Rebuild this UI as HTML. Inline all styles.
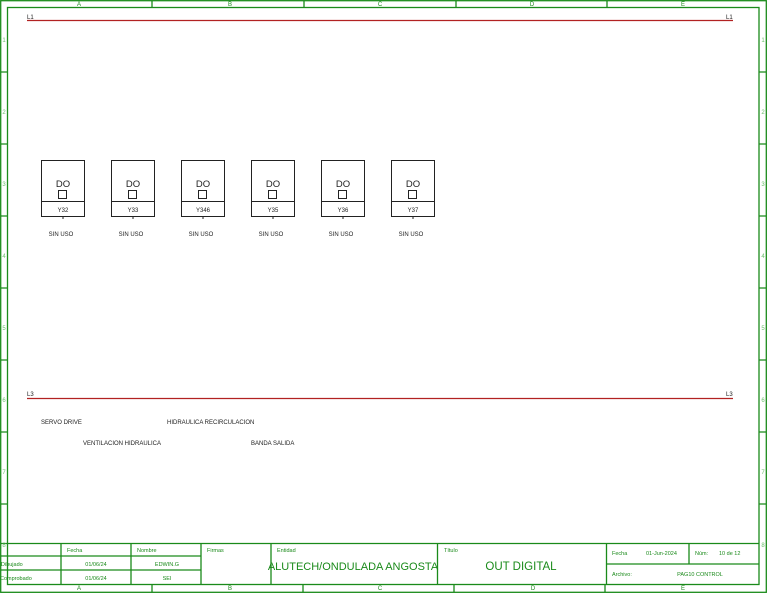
<!DOCTYPE html>
<html><head><meta charset="utf-8"><style>
html,body{margin:0;padding:0;background:#fff;}
svg{display:block;font-family:"Liberation Sans",sans-serif;}
</style></head><body>
<svg width="768" height="594" viewBox="0 0 768 594" xmlns="http://www.w3.org/2000/svg">
<g stroke="#1a8a1a" stroke-width="1.3" fill="none">
<rect x="0.7" y="0.7" width="765.6" height="591.6"/>
<rect x="7.5" y="7.5" width="751.5" height="577"/>
<path d="M152 0.7V7.5M304 0.7V7.5M456 0.7V7.5M607 0.7V7.5"/>
<path d="M152 584.5V592.3M303 584.5V592.3M454 584.5V592.3M605 584.5V592.3"/>
<path d="M0.7 72H7.5M0.7 144H7.5M0.7 216H7.5M0.7 288H7.5M0.7 360H7.5M0.7 432H7.5M0.7 504H7.5"/>
<path d="M759 72H766M759 144H766M759 216H766M759 288H766M759 360H766M759 432H766M759 504H766"/>
<path d="M0.7 543.5H759M0.7 556H201M0.7 570H201M61 543.5V584.5M131 543.5V584.5M201 543.5V584.5M271 543.5V584.5M437.5 543.5V584.5M606.5 543.5V584.5M606.5 564H759M689 543.5V564"/>
</g>
<g fill="#1a8a1a" font-size="6" text-anchor="middle">
<text x="79" y="6">A</text><text x="230" y="6">B</text><text x="380" y="6">C</text><text x="532" y="6">D</text><text x="683" y="6">E</text>
<text x="79" y="590">A</text><text x="230" y="590">B</text><text x="380" y="590">C</text><text x="533" y="590">D</text><text x="683" y="590">E</text>
</g>
<g fill="#6cbf6c" font-size="6" text-anchor="middle">
<text x="4" y="42">1</text><text x="4" y="114">2</text><text x="4" y="186">3</text><text x="4" y="258">4</text><text x="4" y="330">5</text><text x="4" y="402">6</text><text x="4" y="474">7</text><text x="4" y="547">8</text>
<text x="763" y="42">1</text><text x="763" y="114">2</text><text x="763" y="186">3</text><text x="763" y="258">4</text><text x="763" y="330">5</text><text x="763" y="402">6</text><text x="763" y="474">7</text><text x="763" y="547">8</text>
</g>
<g fill="#1a8a1a" font-size="5.5">
<text x="67" y="552">Fecha</text><text x="137" y="552">Nombre</text><text x="207" y="552">Firmas</text><text x="277" y="552">Entidad</text><text x="444" y="552">Título</text>
<text x="1" y="566">Dibujado</text><text x="0" y="580">Comprobado</text>
<text x="96" y="566" text-anchor="middle">01/06/24</text><text x="96" y="580" text-anchor="middle">01/06/24</text>
<text x="167" y="566" text-anchor="middle">EDWIN.G</text><text x="167" y="580" text-anchor="middle">SEI</text>
<text x="612" y="555">Fecha</text><text x="646" y="555">01-Jun-2024</text><text x="695" y="555">Núm:</text><text x="719" y="555">10 de 12</text>
<text x="612" y="576">Archivo:</text><text x="700" y="576" text-anchor="middle">PAG10 CONTROL</text>
<text x="353" y="570" font-size="11" text-anchor="middle">ALUTECH/ONDULADA ANGOSTA</text>
<text x="521" y="570" font-size="11.5" text-anchor="middle">OUT DIGITAL</text>
</g>
<g stroke="#b22222" stroke-width="1.2"><path d="M27 20.5H733M27 398.5H733"/></g>
<g fill="#222" font-size="6">
<text x="27" y="19">L1</text><text x="726" y="19">L1</text><text x="27" y="396">L3</text><text x="726" y="396">L3</text>
<text x="41" y="424">SERVO DRIVE</text><text x="167" y="424">HIDRAULICA RECIRCULACION</text>
<text x="83" y="445">VENTILACION HIDRAULICA</text><text x="251" y="445">BANDA SALIDA</text>
</g>
<g id="c">
<rect x="41.5" y="160.5" width="43" height="56" fill="none" stroke="#222" stroke-width="1"/>
<path d="M41.5 201.5H84.5M63 216.5V219" stroke="#222" stroke-width="1"/>
<rect x="58.5" y="190.5" width="8" height="8" fill="none" stroke="#222" stroke-width="1"/>
</g>
<use href="#c" x="70"/><use href="#c" x="140"/><use href="#c" x="210"/><use href="#c" x="280"/><use href="#c" x="350"/>
<g fill="#222" text-anchor="middle">
<g font-size="9.5"><text x="63" y="187">DO</text><text x="133" y="187">DO</text><text x="203" y="187">DO</text><text x="273" y="187">DO</text><text x="343" y="187">DO</text><text x="413" y="187">DO</text></g>
<g font-size="6"><text x="63" y="212">Y32</text><text x="133" y="212">Y33</text><text x="203" y="212">Y346</text><text x="273" y="212">Y35</text><text x="343" y="212">Y36</text><text x="413" y="212">Y37</text>
<text x="61" y="236">SIN USO</text><text x="131" y="236">SIN USO</text><text x="201" y="236">SIN USO</text><text x="271" y="236">SIN USO</text><text x="341" y="236">SIN USO</text><text x="411" y="236">SIN USO</text></g>
</g>
</svg>
</body></html>
